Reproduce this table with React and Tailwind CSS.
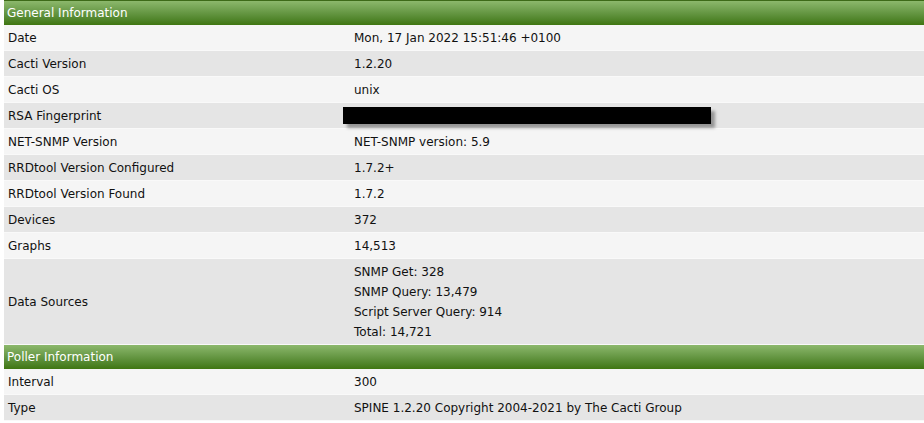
import React from 'react'

const general = [
    ['Date', 'Mon, 17 Jan 2022 15:51:46 +0100'],
    ['Cacti Version', '1.2.20'],
    ['Cacti OS', 'unix'],
    ['RSA Fingerprint', null],
    ['NET-SNMP Version', 'NET-SNMP version: 5.9'],
    ['RRDtool Version Configured', '1.7.2+'],
    ['RRDtool Version Found', '1.7.2'],
    ['Devices', '372'],
    ['Graphs', '14,513'],
]

const dataSources = ['SNMP Get: 328', 'SNMP Query: 13,479', 'Script Server Query: 914', 'Total: 14,721']

const poller = [
    ['Interval', '300'],
    ['Type', 'SPINE 1.2.20 Copyright 2004-2021 by The Cacti Group'],
]

function Header({ title, first }) {
    return (
        <div className={`h-[24px] flex items-center px-[3px] text-white text-[12px] bg-gradient-to-b from-[#8cb86c] to-[#3f7610] ${first ? 'h-[25px] border-t border-[#3d6a18]' : ''}`}>
            {title}
        </div>
    )
}

function Row({ label, value, odd, children }) {
    return (
        <div className={`flex items-center border-b border-[#f9f9f9] ${odd ? 'bg-[#e5e5e5]' : 'bg-[#f5f5f5]'} ${children ? 'h-[86px]' : 'h-[26px]'}`}>
            <div className="w-[346px] pl-[4px]">{label}</div>
            <div className="flex-1 pl-[4px]">
                {children ? children : value === null ? (
                    <div className="ml-[-11px] w-[368px] h-[17px] bg-black shadow-[4px_4px_3px_rgba(0,0,0,0.35)]" />
                ) : value}
            </div>
        </div>
    )
}

export default function App() {
    return (
        <div className="pl-[4px] bg-white min-h-[423px] text-[12px] text-[#111]" style={{ fontFamily: '"DejaVu Sans", Verdana, sans-serif' }}>
            <Header title="General Information" first />
            {general.map(([l, v], i) => (
                <Row key={l} label={l} value={v} odd={i % 2 === 1} />
            ))}
            <Row label="Data Sources" odd>
                <div className="flex flex-col leading-[20px]">
                    {dataSources.map((d) => (
                        <div key={d}>{d}</div>
                    ))}
                </div>
            </Row>
            <Header title="Poller Information" />
            {poller.map(([l, v], i) => (
                <Row key={l} label={l} value={v} odd={i % 2 === 1} />
            ))}
        </div>
    )
}
